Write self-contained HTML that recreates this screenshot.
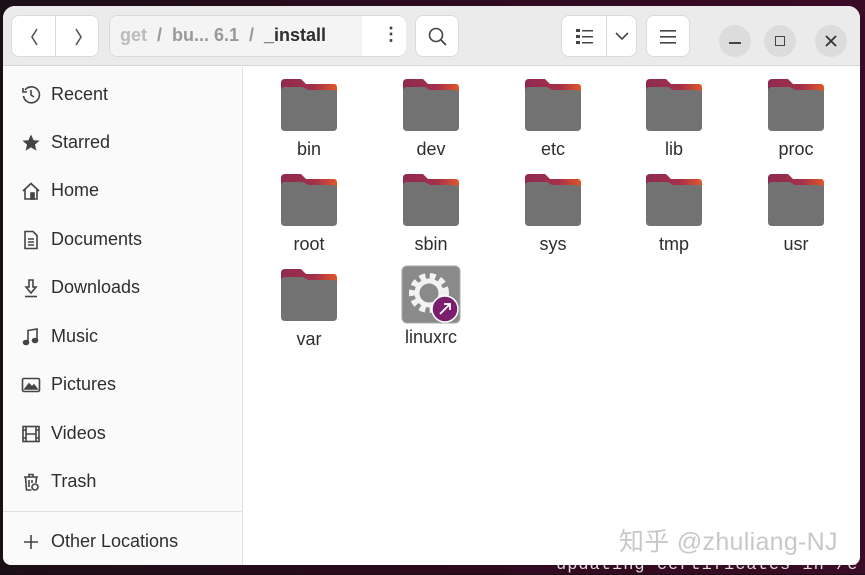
<!DOCTYPE html>
<html><head><meta charset="utf-8"><style>
*{margin:0;padding:0;box-sizing:border-box}
body{width:865px;height:574px;background:#1a0c14;position:relative;overflow:hidden;font-family:"Liberation Sans","Noto Sans CJK SC",sans-serif;color:#333}
.bgl{position:absolute;left:0;top:0;width:865px;height:574px;background:linear-gradient(90deg,#1b0f16,#2c0a1e 50%,#3b0b26)}
.win{position:absolute;left:3px;top:6px;width:857px;height:559px;background:#fff;border-radius:12px 12px 8px 8px;overflow:hidden}
.hdr{position:absolute;left:0;top:0;width:857px;height:60px;background:#ebebeb;border-bottom:1px solid #d6d6d6}
.btn{position:absolute;top:9px;height:42px;background:#fff;border:1px solid #dadada;border-radius:8px}
.side{position:absolute;left:0;top:61px;width:240px;height:498px;background:#fafafa;border-right:1px solid #e4e4e4}
.it{position:absolute;left:18px;font-size:18px;color:#2e2e2e;display:flex;align-items:center}
.it svg{width:20px;height:20px;margin-right:10px;fill:none;stroke:#444;stroke-width:1.6}
.f{position:absolute;width:120px;text-align:center;font-size:18px;color:#2e2e2e}
.f svg{display:block;margin:0 auto 6px}
.wc{position:absolute;top:19px;width:32px;height:32px;border-radius:50%;background:#dcdcdc}
</style></head><body>
<div class="bgl"></div>
<div style="position:absolute;left:556px;top:556px;font:17px 'Liberation Mono',monospace;color:#ddd;letter-spacing:1px">updating certificates in /e</div>
<div class="win">
<div class="hdr">
 <div class="btn" style="left:8px;width:88px"><div style="position:absolute;left:43px;top:0;width:1px;height:40px;background:#dadada"></div>
 <svg style="position:absolute;left:15px;top:11px" width="16" height="20"><path d="M10 2 5 10 10 18" stroke="#555" stroke-width="1.6" fill="none"/></svg>
 <svg style="position:absolute;left:58px;top:11px" width="16" height="20"><path d="M6 2 11 10 6 18" stroke="#555" stroke-width="1.6" fill="none"/></svg></div>
 <div class="btn" style="left:106px;width:297px;background:#f4f4f4"><div style="position:absolute;left:252px;top:0;width:1px;height:40px;background:#dadada;"></div>
 <div style="position:absolute;left:252px;top:0;width:44px;height:40px;background:#fff;border-radius:0 8px 8px 0"></div>
 <div style="position:absolute;left:10px;top:9px;font-size:18px;font-weight:bold;color:#999;white-space:nowrap"><span style="color:#bbb">get</span>&nbsp; / &nbsp;bu... 6.1 &nbsp;/&nbsp; <span style="color:#2e2e2e">_install</span></div>
 <div style="position:absolute;left:272px;top:8px;font-size:18px;font-weight:bold;color:#444">⋮</div></div>
 <div class="btn" style="left:412px;width:44px"><svg style="position:absolute;left:12px;top:11px" width="20" height="20"><circle cx="8" cy="8" r="6.5" stroke="#444" stroke-width="1.6" fill="none"/><path d="M13 13 18 18" stroke="#444" stroke-width="1.8"/></svg></div>
 <div class="btn" style="left:558px;width:76px"><div style="position:absolute;left:44px;top:0;width:1px;height:40px;background:#dadada"></div>
 <svg style="position:absolute;left:14px;top:12px" width="18" height="16" fill="#444"><rect x="0" y="1" width="4" height="3"/><rect x="0" y="7" width="4" height="3"/><rect x="0" y="13" width="4" height="3"/><rect x="6" y="2" width="11" height="1.5"/><rect x="6" y="8" width="11" height="1.5"/><rect x="6" y="14" width="11" height="1.5"/></svg>
 <svg style="position:absolute;left:52px;top:14px" width="16" height="12"><path d="M2 3 8 9 14 3" stroke="#444" stroke-width="1.6" fill="none"/></svg></div>
 <div class="btn" style="left:643px;width:44px"><svg style="position:absolute;left:13px;top:13px" width="18" height="16" fill="#444"><rect y="1" width="16" height="1.6"/><rect y="7" width="16" height="1.6"/><rect y="13" width="16" height="1.6"/></svg></div>
 <div class="wc" style="left:716px"><div style="position:absolute;left:10px;top:17px;width:12px;height:1.6px;background:#444"></div></div>
 <div class="wc" style="left:761px"><div style="position:absolute;left:11px;top:11px;width:10px;height:10px;border:1.6px solid #444"></div></div>
 <div class="wc" style="left:812px"><svg style="position:absolute;left:9px;top:9px" width="14" height="14"><path d="M2 2 12 12M12 2 2 12" stroke="#333" stroke-width="1.8"/></svg></div>
</div>
<div class="side">
 <div class="it" style="top:17px"><svg viewBox="0 0 20 20"><path d="M4 5A8 8 0 1 1 2.5 11"/><path d="M10 5v5l3 2"/><path d="M2 3v4h4"/></svg>Recent</div>
 <div class="it" style="top:65px"><svg viewBox="0 0 20 20"><path d="M10 1.5 12.6 7.2 18.6 7.6 14 11.6 15.4 17.6 10 14.4 4.6 17.6 6 11.6 1.4 7.6 7.4 7.2Z" fill="#444" stroke="none"/></svg>Starred</div>
 <div class="it" style="top:113px"><svg viewBox="0 0 20 20"><path d="M2 10 10 2.5 18 10M4 8.5V18h12V8.5"/><rect x="10" y="12" width="3" height="6" fill="#444"/></svg>Home</div>
 <div class="it" style="top:162px"><svg viewBox="0 0 20 20"><path d="M4 1.5h8l4 4v13H4Z"/><path d="M7 9h6M7 12h6M7 15h6"/></svg>Documents</div>
 <div class="it" style="top:210px"><svg viewBox="0 0 20 20"><path d="M8 2h4v7h3l-5 6-5-6h3Z"/><path d="M4 18.5h12"/></svg>Downloads</div>
 <div class="it" style="top:259px"><svg viewBox="0 0 20 20"><path d="M7 15V3.5l9-1.5v11"/><ellipse cx="5" cy="15.5" rx="2.5" ry="2" fill="#444"/><ellipse cx="14" cy="13.5" rx="2.5" ry="2" fill="#444"/></svg>Music</div>
 <div class="it" style="top:307px"><svg viewBox="0 0 20 20"><rect x="1.5" y="3.5" width="17" height="13" rx="1.5"/><path d="M4 14l4-5 3 3 2-2 3 4Z" fill="#444"/></svg>Pictures</div>
 <div class="it" style="top:356px"><svg viewBox="0 0 20 20"><rect x="2" y="2.5" width="16" height="15"/><path d="M5 2.5v15M15 2.5v15M5 10h10M2 6h3M2 14h3M15 6h3M15 14h3"/></svg>Videos</div>
 <div class="it" style="top:404px"><svg viewBox="0 0 20 20"><path d="M3 5h14M8 5V2.5h4V5M4.5 5l1 13h5M15.5 5l-.5 6"/><path d="M8 8v7M11 8v3"/><circle cx="14" cy="15" r="3"/></svg>Trash</div>
 <div style="position:absolute;left:0;top:444px;width:239px;height:1px;background:#e0e0e0"></div>
 <div class="it" style="top:464px"><svg viewBox="0 0 20 20"><path d="M10 3v14M3 10h14"/></svg>Other Locations</div>
</div>
<svg width="0" height="0" style="position:absolute"><defs>
<linearGradient id="tab" x1="0" x2="1"><stop offset="0" stop-color="#8e2a50"/><stop offset=".6" stop-color="#a3304a"/><stop offset="1" stop-color="#e0582a"/></linearGradient>
<symbol id="fold" viewBox="0 0 60 56"><path d="M2 6Q2 2 6 2H22L27 7H55Q58 7 58 11V20H2Z" fill="url(#tab)"/><path d="M2 14Q2 10 6 10H24L29 13H54Q58 13 58 17V50Q58 54 54 54H6Q2 54 2 50Z" fill="#727272"/></symbol></defs></svg>
<div class="f" style="left:246px;top:71px"><svg width="60" height="56"><use href="#fold"/></svg>bin</div>
<div class="f" style="left:368px;top:71px"><svg width="60" height="56"><use href="#fold"/></svg>dev</div>
<div class="f" style="left:490px;top:71px"><svg width="60" height="56"><use href="#fold"/></svg>etc</div>
<div class="f" style="left:611px;top:71px"><svg width="60" height="56"><use href="#fold"/></svg>lib</div>
<div class="f" style="left:733px;top:71px"><svg width="60" height="56"><use href="#fold"/></svg>proc</div>
<div class="f" style="left:246px;top:166px"><svg width="60" height="56"><use href="#fold"/></svg>root</div>
<div class="f" style="left:368px;top:166px"><svg width="60" height="56"><use href="#fold"/></svg>sbin</div>
<div class="f" style="left:490px;top:166px"><svg width="60" height="56"><use href="#fold"/></svg>sys</div>
<div class="f" style="left:611px;top:166px"><svg width="60" height="56"><use href="#fold"/></svg>tmp</div>
<div class="f" style="left:733px;top:166px"><svg width="60" height="56"><use href="#fold"/></svg>usr</div>
<div class="f" style="left:246px;top:261px"><svg width="60" height="56"><use href="#fold"/></svg>var</div>
<div class="f" style="left:368px;top:259px"><svg width="60" height="60" style="margin-bottom:2px"><rect x="1" y="1" width="58" height="57" rx="5" fill="#8a8a8a" stroke="#aaa"/><g transform="translate(28 28)"><circle r="16" fill="none" stroke="#f2f2f2" stroke-width="8" stroke-dasharray="5.5 4"/><circle r="12" fill="none" stroke="#f2f2f2" stroke-width="5"/></g><circle cx="44" cy="44" r="13" fill="#7a1e6e" stroke="#fff" stroke-width="1.5"/><path d="M39 49 49 39M43 39h6v6" stroke="#fff" stroke-width="1.8" fill="none"/></svg>linuxrc</div>
<div style="position:absolute;left:616px;top:516px;font-size:25px;letter-spacing:0.3px;color:#c8c8c8">知乎 @zhuliang-NJ</div>
</div>
</body></html>
